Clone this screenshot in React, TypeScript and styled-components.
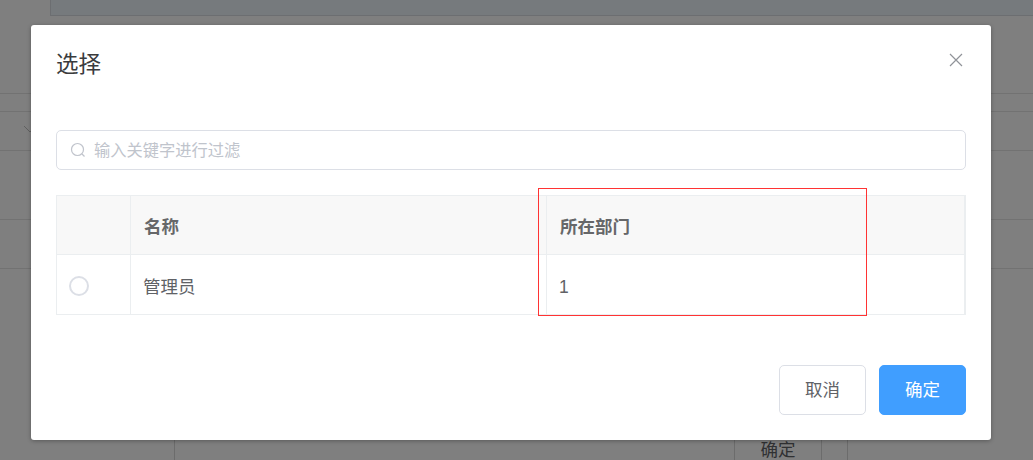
import React from 'react';
import styled, { createGlobalStyle } from 'styled-components';

const GlobalStyle = createGlobalStyle`
  html, body {
    margin: 0;
    padding: 0;
    height: 100%;
    overflow: hidden;
    background: #fff;
    font-family: "Liberation Sans", "Noto Sans CJK SC", sans-serif;
  }
`;

const Root = styled.div`
  position: relative;
  width: 1033px;
  height: 460px;
  overflow: hidden;
`;

// page behind the dialog
const Page = styled.div`
  display: flex;
  flex-direction: column;
  height: 100%;
`;

const TopBand = styled.div`
  height: 15px;
  margin-left: 50px;
  background: #ecf4fa;
  border-left: 1px solid #d8dde3;
  border-bottom: 1px solid #d8dde3;
`;

const PageRule = styled.div<{ $gap: number }>`
  margin-top: ${p => p.$gap}px;
  height: 1px;
  background: #e4e4e4;
`;

const Chevron = styled.div`
  height: 38px;
  padding: 10px 0 0 23px;
  box-sizing: border-box;
  color: #c0c0c0;
`;

const PageFooter = styled.div`
  flex: 1;
  margin: 0 185px 0 174px;
  border-left: 1px solid #d8d8d8;
  border-right: 1px solid #d8d8d8;
  display: flex;
  justify-content: flex-end;
  padding-right: 25px;
`;

const PageButton = styled.div`
  width: 86px;
  height: 100%;
  border-left: 1px solid #d8d8d8;
  border-right: 1px solid #d8d8d8;
  display: flex;
  align-items: flex-end;
  justify-content: center;
  font-size: 17.5px;
  line-height: 20px;
  color: #606266;
`;

const Backdrop = styled.div`
  position: absolute;
  inset: 0;
  background: rgba(0, 0, 0, 0.5);
  display: flex;
  justify-content: center;
  align-items: flex-start;
  padding: 25px 42px 0 31px;
  box-sizing: border-box;
`;

const Dialog = styled.div`
  position: relative;
  width: 960px;
  height: 415px;
  background: #fff;
  border-radius: 3px;
  box-shadow: 0 1px 4px rgba(0, 0, 0, 0.3);
  padding: 0 25px;
  box-sizing: border-box;
  display: flex;
  flex-direction: column;
`;

const Header = styled.div`
  height: 105px;
  display: flex;
  justify-content: space-between;
  align-items: flex-start;
`;

const Title = styled.h2`
  margin: 23px 0 0;
  font-size: 22.5px;
  line-height: 33px;
  font-weight: 400;
  color: #3a3b3d;
`;

const CloseButton = styled.button`
  margin: 28px 3px 0 0;
  padding: 0;
  border: 0;
  background: none;
  width: 14px;
  height: 14px;
  display: flex;
  color: #909399;
`;

const SearchBox = styled.div`
  height: 40px;
  box-sizing: border-box;
  border: 1px solid #dcdfe6;
  border-radius: 5px;
  display: flex;
  align-items: center;
  padding-left: 13px;
  gap: 8px;
  color: #c0c4cc;
`;

const SearchInput = styled.input`
  flex: 1;
  border: 0;
  outline: 0;
  padding: 0;
  background: none;
  font: inherit;
  font-size: 16.25px;
  &::placeholder {
    color: #c0c4cc;
    opacity: 1;
  }
`;

const Table = styled.div`
  margin-top: 25px;
  height: 120px;
  box-sizing: border-box;
  border: 1px solid #ebeef0;
  border-right-width: 2px;
  display: flex;
  flex-direction: column;
`;

const Row = styled.div<{ $head?: boolean }>`
  height: ${p => (p.$head ? 58 : 60)}px;
  box-sizing: border-box;
  display: grid;
  grid-template-columns: 73px 416px 1fr;
  background: ${p => (p.$head ? '#f8f8f8' : '#fff')};
  & + & {
    border-top: 1px solid #ebeef0;
  }
`;

const Cell = styled.div<{ $head?: boolean }>`
  display: flex;
  align-items: center;
  padding: ${p => (p.$head ? '4px 0 0 13px' : '4px 0 0 12px')};
  font-size: 17.5px;
  line-height: 26px;
  font-weight: ${p => (p.$head ? 700 : 400)};
  color: ${p => (p.$head ? '#666769' : '#606266')};
  & + & {
    border-left: 1px solid #ebeef0;
  }
`;

const Radio = styled.span`
  width: 20px;
  height: 20px;
  margin-top: -2px;
  box-sizing: border-box;
  border: 2px solid #dcdfe6;
  border-radius: 50%;
`;

const Footer = styled.div`
  margin-top: 50px;
  display: flex;
  justify-content: flex-end;
  gap: 13px;
`;

const Button = styled.button<{ $primary?: boolean }>`
  width: 87px;
  height: 50px;
  box-sizing: border-box;
  border-radius: 5px;
  border: 1px solid ${p => (p.$primary ? '#409eff' : '#dcdfe6')};
  background: ${p => (p.$primary ? '#409eff' : '#fff')};
  color: ${p => (p.$primary ? '#fff' : '#606266')};
  font: inherit;
  font-size: 17.5px;
  padding: 0 0 3px;
`;

const Annotation = styled.div`
  position: absolute;
  left: 538px;
  top: 188px;
  width: 329px;
  height: 128px;
  box-sizing: border-box;
  border: 1px solid #f33;
  pointer-events: none;
`;

const App: React.FC = () => {
  return (
    <Root>
      <GlobalStyle />
      <Page>
        <TopBand />
        <PageRule $gap={77} />
        <PageRule $gap={17} />
        <Chevron>
          <svg width="14" height="14" viewBox="0 0 14 14" fill="none" stroke="currentColor" strokeWidth="1">
            <path d="M1 4l6 6 6-6" />
          </svg>
        </Chevron>
        <PageRule $gap={0} />
        <PageRule $gap={68} />
        <PageRule $gap={48} />
        <PageFooter>
          <PageButton>确定</PageButton>
        </PageFooter>
      </Page>
      <Backdrop>
        <Dialog>
          <Header>
            <Title>选择</Title>
            <CloseButton aria-label="关闭">
              <svg width="14" height="14" viewBox="0 0 14 14" fill="none" stroke="currentColor" strokeWidth="1.2">
                <path d="M1 1l12 12M13 1L1 13" />
              </svg>
            </CloseButton>
          </Header>
          <SearchBox>
            <svg width="16" height="16" viewBox="0 0 16 16" fill="none" stroke="currentColor" strokeWidth="1.2">
              <circle cx="7.5" cy="7.5" r="6" />
              <path d="M12 12l2.5 2.5" />
            </svg>
            <SearchInput placeholder="输入关键字进行过滤" />
          </SearchBox>
          <Table>
            <Row $head>
              <Cell $head />
              <Cell $head>名称</Cell>
              <Cell $head>所在部门</Cell>
            </Row>
            <Row>
              <Cell>
                <Radio />
              </Cell>
              <Cell>管理员</Cell>
              <Cell>1</Cell>
            </Row>
          </Table>
          <Footer>
            <Button>取消</Button>
            <Button $primary>确定</Button>
          </Footer>
        </Dialog>
      </Backdrop>
      <Annotation />
    </Root>
  );
};

export default App;
